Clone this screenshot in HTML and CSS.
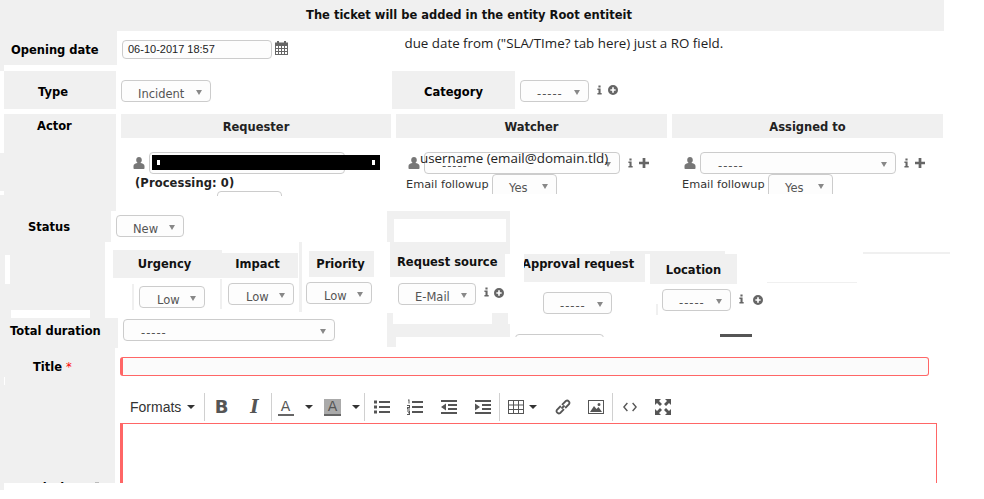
FILE: index.html
```html
<!DOCTYPE html>
<html lang="en">
<head>
<meta charset="utf-8">
<title>New ticket</title>
<link rel="stylesheet" href="styles.css">
</head>
<body>
<svg class="sprites" aria-hidden="true">
  <symbol id="i-user" viewBox="0 0 12 12"><path d="M6 0C4.3 0 3.2 1.3 3.2 3c0 1.3.6 2.400 1.500 2.900C2.400 6.200.5 7 .5 9v2.200c0 .4.300.8.800.8h9.400c.5 0 .8-.4.800-.8V9c0-2-1.900-2.800-4.200-3.100.9-.5 1.500-1.600 1.500-2.900C8.800 1.300 7.700 0 6 0z"/></symbol>
  <symbol id="i-info" viewBox="0 0 6 11"><path d="M1.700 0h2.600v2.400H1.700zM.5 3.700h3.800v5.500H5.600V11H.5V9.200h1.300V5.500H.5z"/></symbol>
  <symbol id="i-plus" viewBox="0 0 11 11"><path d="M4 0h3v4h4v3H7v4H4V7H0V4h4z"/></symbol>
  <symbol id="i-plusc" viewBox="0 0 11 11"><path fill-rule="evenodd" d="M5.500 0a5.500 5.500 0 1 0 0 11 5.500 5.500 0 0 0 0-11zM4.600 2.600h1.800v2h2v1.800h-2v2H4.600v-2h-2V4.600h2z"/></symbol>
  <symbol id="i-cal" viewBox="0 0 13 14"><path fill-rule="evenodd" d="M2 0h2v1.500h5V0h2v1.500h2V14H0V1.500h2zM1 5v2h2V5zm3 0v2h2V5zm3 0v2h2V5zm3 0v2h2V5zM1 8v2h2V8zm3 0v2h2V8zm3 0v2h2V8zm3 0v2h2V8zM1 11v2h2v-2zm3 0v2h2v-2zm3 0v2h2v-2zm3 0v2h2v-2z"/></symbol>
</svg>

<main class="page">
  <header class="banner">The ticket will be added in the entity Root entiteit</header>

  <section class="row row-open">
    <div class="lab lab-open">Opening date</div>
    <div class="date">06-10-2017 18:57</div>
    <svg class="ico ico-cal"><use href="#i-cal"/></svg>
    <p class="note">due date from ("SLA/TIme? tab here) just a RO field.</p>
    <i class="scrap sc-i"></i>
  </section>

  <section class="row row-type">
    <div class="lab lab-type">Type</div>
    <div class="sel sel-type">Incident</div>
    <div class="lab lab-cat">Category</div>
    <div class="sel sel-cat dash">-----</div>
    <svg class="ico ico-i i-cat"><use href="#i-info"/></svg>
    <svg class="ico ico-pc"><use href="#i-plusc"/></svg>
  </section>

  <section class="row row-actor">
    <div class="lab lab-actor">Actor</div>
    <div class="actor a-req">
      <h3 class="bar">Requester</h3>
      <div class="actor-line">
        <svg class="ico ico-user"><use href="#i-user"/></svg>
        <div class="sel sel-actor sel-req"></div>
      </div>
      <div class="processing">(Processing: 0)</div>
      <div class="clip clip-req"><div class="sel sel-cut"></div></div>
      <div class="redact"><i class="tick"></i><i class="tick"></i></div>
    </div>
    <div class="actor a-wat">
      <h3 class="bar">Watcher</h3>
      <div class="actor-line">
        <svg class="ico ico-user"><use href="#i-user"/></svg>
        <div class="sel sel-actor dash">-----</div>
        <svg class="ico ico-i"><use href="#i-info"/></svg>
        <svg class="ico ico-p"><use href="#i-plus"/></svg>
      </div>
      <div class="follow"><span class="follow-t">Email followup</span><div class="clip"><div class="sel sel-yes">Yes</div></div></div>
      <div class="typed">username (email@domain.tld)</div>
    </div>
    <div class="actor a-ass">
      <h3 class="bar">Assigned to</h3>
      <div class="actor-line">
        <svg class="ico ico-user"><use href="#i-user"/></svg>
        <div class="sel sel-actor dash">-----</div>
        <svg class="ico ico-i"><use href="#i-info"/></svg>
        <svg class="ico ico-p"><use href="#i-plus"/></svg>
      </div>
      <div class="follow"><span class="follow-t">Email followup</span><div class="clip"><div class="sel sel-yes">Yes</div></div></div>
    </div>
    <i class="scrap sc-j"></i>
  </section>

  <section class="row row-block">
    <div class="block-left">
      <div class="row sub-status">
        <div class="lab lab-status">Status</div>
        <div class="sel sel-status">New</div>
      </div>
      <div class="row sub-prio">
        <div class="lab lab-blank"></div>
        <div class="cell c-urg"><div class="bar2">Urgency</div><div class="sel sel-low">Low</div></div>
        <div class="cell c-imp"><div class="bar2">Impact</div><div class="sel sel-low">Low</div></div>
        <div class="cell c-pri"><div class="bar2">Priority</div><div class="sel sel-low">Low</div></div>
      </div>
      <div class="row sub-dur">
        <div class="lab lab-dur">Total duration</div>
        <div class="sel sel-dur dash">-----</div>
      </div>
    </div>
    <div class="req">
      <div class="req-top"><div class="req-inset"></div></div>
      <div class="req-bar">Request source</div>
      <div class="req-line">
        <div class="sel sel-mail">E-Mail</div>
        <svg class="ico ico-i"><use href="#i-info"/></svg>
        <svg class="ico ico-pc"><use href="#i-plusc"/></svg>
      </div>
      <div class="req-foot"></div>
    </div>
    <div class="appr">
      <div class="appr-bar">Approval request</div>
      <div class="sel sel-appr dash">-----</div>
      <div class="clip clip-appr"><div class="sel sel-cut2"></div></div>
    </div>
    <div class="loc">
      <div class="loc-bar">Location</div>
      <div class="loc-line">
        <div class="sel sel-loc dash">-----</div>
        <svg class="ico ico-i"><use href="#i-info"/></svg>
        <svg class="ico ico-pc"><use href="#i-plusc"/></svg>
      </div>
      <div class="dark"></div>
    </div>
    <i class="scrap sc-a"></i><i class="scrap sc-b"></i><i class="scrap sc-c"></i><i class="scrap sc-d"></i>
    <i class="scrap sc-e"></i><i class="scrap sc-f"></i><i class="scrap sc-g"></i><i class="scrap sc-h"></i>
    <i class="scrap sc-k"></i><i class="scrap sc-l"></i><i class="scrap sc-m"></i><i class="scrap sc-n"></i>
    <i class="wipe w-a"></i><i class="wipe w-b"></i>
  </section>

  <section class="row row-title">
    <div class="lab lab-title">Title <span class="req-star">*</span></div>
    <div class="title-input"></div>
    <i class="wipe w-c"></i><i class="wipe w-d"></i>
  </section>

  <section class="row row-desc">
    <div class="lab lab-desc"><span class="desc-t">Description <span class="req-star">*</span></span><i class="help-mark"></i></div>
    <div class="editor">
      <div class="toolbar">
        <div class="fmt">Formats<i class="caret caret-fmt"></i></div>
        <i class="sep"></i>
        <span class="t-b">B</span>
        <span class="t-i">I</span>
        <i class="sep"></i>
        <span class="t-a">A</span>
        <i class="caret caret-1"></i>
        <span class="t-a t-hi">A</span>
        <i class="caret caret-2"></i>
        <i class="sep"></i>
        <svg class="tb" viewBox="0 0 16 16"><path d="M0 1.500h3v3H0zM0 6.500h3v3H0zM0 11.500h3v3H0zM5 2h11v2H5zM5 7h11v2H5zM5 12h11v2H5z"/></svg>
        <svg class="tb" viewBox="0 0 16 16"><path d="M5 2h11v2H5zM5 7h11v2H5zM5 12h11v2H5zM1 .5h1.500v4H1.500V1.500H1zM0 6h3v3H1v.6h2v1H0V8h2v-1H0zM0 11.500h3v4.500H0v-1h2v-.7H1v-1h1v-.8H0z"/></svg>
        <svg class="tb" viewBox="0 0 16 16"><path d="M0 1h16v2H0zM7 5h9v2H7zM7 9h9v2H7zM0 13h16v2H0zM5 4.500v7L0 8z"/></svg>
        <svg class="tb" viewBox="0 0 16 16"><path d="M0 1h16v2H0zM7 5h9v2H7zM7 9h9v2H7zM0 13h16v2H0zM0 4.500v7L5 8z"/></svg>
        <i class="sep"></i>
        <svg class="tb tb-table" viewBox="0 0 16 14"><path fill-rule="evenodd" d="M0 0h16v14H0zM1 1v3.500h4V1zm5 0v3.500h4V1zm5 0v3.500h4V1zM1 5.500V9h4V5.500zm5 0V9h4V5.500zm5 0V9h4V5.500zM1 10v3h4v-3zm5 0v3h4v-3zm5 0v3h4v-3z"/></svg>
        <i class="caret caret-3"></i>
        <svg class="tb tb-link" viewBox="0 0 16 16"><path d="M6.500 9.500l3-3M5.800 7 2 10.800a2.300 2.300 0 0 0 3.200 3.200L9 10.200M7 5.800 10.800 2A2.300 2.300 0 0 1 14 5.200L10.200 9" /></svg>
        <svg class="tb" viewBox="0 0 16 14"><path fill-rule="evenodd" d="M0 0h16v14H0zM1 1v12h14V1zM2 12l4-6 2.500 3 2-2L14 12zM11 3a1.500 1.500 0 1 1 0 3 1.500 1.500 0 0 1 0-3z"/></svg>
        <i class="sep"></i>
        <svg class="tb tb-code" viewBox="0 0 16 10"><path d="M5 .5 1 5l4 4.500M11 .5 15 5l-4 4.500"/></svg>
        <svg class="tb" viewBox="0 0 16 16"><path d="M0 0h6L4 2l3 3-2 2-3-3-2 2zM16 0v6l-2-2-3 3-2-2 3-3-2-2zM0 16v-6l2 2 3-3 2 2-3 3 2 2zM16 16h-6l2-2-3-3 2-2 3 3 2-2z"/></svg>
      </div>
      <div class="area"></div>
    </div>
  </section>
  <i class="scrap sc-o"></i>
</main>
</body>
</html>
```

FILE: styles.css
```css
* { box-sizing: border-box; }
html, body { margin: 0; padding: 0; background: #fff; }
body { font-family: "DejaVu Sans", sans-serif; font-size: 11.500px; color: #000; }
.sprites { display: none; }

.page { position: relative; width: 984px; height: 499px; overflow: hidden; }
.banner { width: 944px; height: 31px; padding: 8px 6px 0 0; background: #f0f0f0; text-align: center; font-weight: bold; color: #111; }

.row { display: flex; align-items: flex-start; }
.row-open { height: 40px; position: relative; }
.row-type { height: 43px; }
.row-actor { height: 81px; position: relative; }
.row-block { height: 153px; position: relative; }
.row-title { height: 37px; position: relative; }
.row-desc { height: 98px; overflow: hidden; position: relative; }

.lab { flex: none; background: #f0f0f0; font-weight: bold; }
.lab-open { width: 117px; height: 34px; padding: 12px 0 0 11px; }
.lab-type { width: 112px; height: 38px; margin-left: 4px; padding: 14px 0 0 34px; }
.lab-cat { width: 123px; height: 38px; margin-left: 181px; padding: 14px 0 0; text-align: center; }
.lab-actor { width: 112px; height: 81px; margin-left: 4px; padding: 5px 0 0 33px; }
.lab-status { width: 111px; height: 47px; padding: 25px 0 0 28px; }
.lab-blank { width: 105px; height: 76px; }
.lab-dur { width: 118px; height: 30px; padding: 6px 0 0 10px; }
.lab-title { width: 115px; height: 37px; padding: 12px 0 0 33px; }
.lab-desc { width: 115px; height: 98px; padding: 96px 0 0 6px; overflow: hidden; white-space: nowrap; }
.req-star { color: #f00; font-weight: normal; }
.help-mark { position: absolute; left: 95px; top: 97px; width: 4px; height: 1px; background: #bbb; }

/* dropdowns */
.sel { position: relative; flex: none; height: 22px; padding: 5px 0 0 16px; border: 1px solid #ccc; border-radius: 4px; background: #fdfdfd; font-size: 11.500px; line-height: 16px; color: #555; }
.sel::after { content: ""; position: absolute; right: 8px; top: 9px; border: 3px solid transparent; border-top: 5px solid #888; border-bottom: 0; }
.dash { letter-spacing: 1px; }
.sel-type { width: 90px; margin: 9px 0 0 5px; }
.sel-cat { width: 69px; margin: 9px 0 0 5px; }
.sel-status { width: 68px; margin: 20px 0 0 5px; }
.sel-low { width: 66px; }
.sel-dur { width: 212px; margin: 1px 0 0 5px; padding-left: 17px; }
.sel-mail { width: 78px; }
.sel-appr { width: 69px; margin: 10px 0 0 19px; }
.sel-loc { width: 69px; }
.sel-actor { width: 196px; margin-left: 4px; padding-left: 17px; }
.sel-req::after { display: none; }
.sel-yes { width: 65px; height: 26px; }
.sel-cut, .sel-cut2 { height: 26px; background: #fff; }
.sel-cut::after, .sel-cut2::after { display: none; }
.sel-cut { width: 65px; }
.sel-cut2 { width: 89px; }
.clip { flex: none; height: 20px; overflow: hidden; }

/* small icons */
.ico { display: block; flex: none; fill: #666; }
.ico-cal { width: 13px; height: 14px; margin: 10px 0 0 3px; position: absolute; left: 272px; top: 0; fill: #666; }
.ico-i { width: 5px; height: 10px; margin: 0 0 0 8px; }
.ico-pc { width: 10px; height: 10px; margin: 0 0 0 6px; }
.ico-p { width: 10px; height: 10px; margin: 0 0 0 6px; }
.ico-user { width: 12px; height: 12px; fill: #777; }
.i-cat { margin-left: 8px; }
.row-type .ico { margin-top: 14px; }

/* top row */
.date { width: 150px; height: 19px; margin: 9px 0 0 5px; padding: 0 0 0 5px; border: 1px solid #ccc; border-radius: 4px; background: #fdfdfd; font-family: "Liberation Sans", sans-serif; font-size: 11px; line-height: 17px; color: #222; }
.note { margin: 4px 0 0 0; position: absolute; left: 404.500px; top: 0; font-family: "Open Sans", sans-serif; font-size: 13.350px; line-height: 16px; color: #222; white-space: nowrap; }

/* actors */
.actor { position: relative; flex: none; margin-left: 5px; }
.a-req { width: 270px; }
.a-wat, .a-ass { width: 271px; }
.bar { margin: 0; height: 24px; background: #f0f0f0; text-align: center; font-size: 11.500px; line-height: 26px; font-weight: bold; color: #222; }
.actor-line { display: flex; align-items: center; height: 22px; margin: 14px 0 0 12px; }
.processing { margin: 1px 0 0 14px; height: 16px; font-weight: bold; font-size: 11.500px; line-height: 16px; letter-spacing: .1px; color: #222; }
.clip-req { height: 5px; margin-left: 96px; width: 65px; }
.follow { display: flex; margin: 0 0 0 10px; height: 20px; }
.follow-t { width: 86px; padding-top: 3px; font-size: 11.300px; line-height: 16px; color: #333; white-space: nowrap; }
.redact { position: absolute; left: 31px; top: 41px; display: flex; justify-content: space-between; align-items: center; width: 228px; height: 15px; padding: 0 5px; background: #000; }
.tick { width: 3px; height: 5px; background: #fff; }
.typed { position: absolute; left: 24px; top: 35px; font-family: "Open Sans", sans-serif; font-size: 13.400px; line-height: 18px; color: #222; white-space: nowrap; }

/* block */
.block-left { flex: none; width: 387px; }
.sub-status { height: 47px; }
.sub-prio { height: 76px; }
.sub-dur { height: 30px; }
.cell { flex: none; font-weight: bold; }
.bar2 { background: #f0f0f0; text-align: center; color: #111; }
.c-urg { width: 109px; margin: 8px 0 0 8px; }
.c-urg .bar2 { height: 28px; padding-top: 7px; padding-right: 6px; }
.c-urg .sel { margin: 8px 0 0 26px; padding-left: 17px; font-weight: normal; }
.c-imp { width: 76px; margin-top: 11px; }
.c-imp .bar2 { height: 25px; padding-top: 4px; padding-right: 5px; }
.c-imp .sel { margin: 5px 0 0 6px; padding-left: 17px; font-weight: normal; }
.c-pri { width: 65px; margin: 9px 0 0 11px; }
.c-pri .bar2 { height: 26px; padding-top: 6px; padding-right: 2px; }
.c-pri .sel { margin: 5px 0 0 -3px; padding-left: 17px; font-weight: normal; }

.req { flex: none; width: 123px; margin-top: 16px; }
.req-top { height: 31px; padding: 8px 4px 0 7px; background: #f0f0f0; }
.req-inset { height: 23px; background: #fff; }
.req-bar { height: 35px; margin-left: 3px; width: 115px; padding: 13px 0 0 7px; background: #f0f0f0; font-weight: bold; color: #111; }
.req-line { display: flex; height: 47px; padding: 6px 0 0 11px; }
.req-line .ico-i { margin-top: 4px; }
.req-line .ico-pc { margin-top: 5px; margin-left: 5px; }
.req-foot { height: 13px; background: #f0f0f0; }

.appr { flex: none; width: 140px; margin-top: 59px; }
.appr-bar { width: 121px; height: 28px; margin-left: 14px; padding-top: 3px; text-indent: -2px; overflow: hidden; white-space: nowrap; background: #f0f0f0; font-weight: bold; color: #111; }
.sel-appr { margin-left: 33px; }
.clip-appr { height: 3px; margin: 20px 0 0 5px; width: 89px; }

.loc { flex: none; width: 120px; margin-top: 59px; }
.loc-bar { width: 87px; height: 30px; padding: 9px 0 0; text-align: center; background: #f0f0f0; font-weight: bold; color: #111; }
.loc-line { display: flex; margin: 5px 0 0 12px; }
.loc-line .ico-i { margin-top: 5px; }
.loc-line .ico-pc { margin-top: 6px; margin-left: 9px; }
.dark { width: 32px; height: 3px; margin: 23px 0 0 70px; background: #555; }

/* loose fragments left by the paste-up */
.scrap { position: absolute; background: #f0f0f0; }
.wipe { position: absolute; background: #fff; }
.sc-a { left: 387px; top: 118px; width: 6px; height: 11px; }
.sc-b { left: 492px; top: 118px; width: 16px; height: 11px; }
.sc-c { left: 387px; top: 142px; width: 9px; height: 10px; }
.sc-d { left: 610px; top: 56px; width: 115px; height: 3px; }
.sc-e { left: 863px; top: 57px; width: 87px; height: 2px; }
.sc-f { left: 767px; top: 87px; width: 90px; height: 1px; }
.sc-g { left: 132px; top: 89px; width: 2px; height: 26px; }
.sc-h { left: 656px; top: 109px; width: 2px; height: 11px; }
.sc-i { left: 0; top: 34px; width: 4px; height: 6px; }
.sc-j { left: 0; top: 39px; width: 4px; height: 38px; }
.sc-k { left: 111px; top: 0; width: 5px; height: 16px; }
.sc-l { left: 505px; top: 47px; width: 5px; height: 12px; }
.sc-m { left: 220px; top: 84px; width: 2px; height: 30px; }
.sc-n { left: 299px; top: 47px; width: 3px; height: 70px; }
.sc-o { left: 0; top: 483px; width: 4px; height: 7px; }
.w-a { left: 5px; top: 60px; width: 5px; height: 29px; }
.w-b { left: 11px; top: 115px; width: 79px; height: 8px; }
.w-c { left: 4px; top: 29px; width: 1px; height: 29px; }
.w-d { left: 0; top: 59px; width: 4px; height: 4px; }

/* title + editor */
.title-input { width: 809px; height: 19px; margin: 9px 0 0 5px; border: 1px solid #f66; border-left-width: 3px; border-radius: 3px; background: #fbfbfb; }
.editor { flex: none; width: 817px; margin-left: 5px; }
.toolbar { display: grid; grid-template-columns: 84px 1px 33px 33px 1px 27px 23px 21px 21px 1px 33px 34px 34px 33px 1px 27px 19px 33px 33px 1px 33px 34px; align-items: center; justify-items: center; height: 38px; padding-top: 8px; grid-template-rows: 28px; }
.fmt { justify-self: start; display: flex; align-items: center; padding-left: 10px; font-family: "Liberation Sans", sans-serif; font-size: 14px; color: #333; }
.sep { width: 1px; height: 28px; background: #d0d0d0; }
.caret { display: block; border: 4px solid transparent; border-top: 4px solid #333; border-bottom: 0; justify-self: start; }
.caret-fmt { margin-left: 6px; }
.caret-1 { margin-left: 6px; }
.caret-2 { margin-left: 9px; }
.caret-3 { margin-left: 2px; }
.t-b, .t-i, .t-a { font-family: "DejaVu Sans", sans-serif; color: #555; }
.t-b { font-size: 18px; line-height: 20px; font-weight: bold; }
.t-i { font-family: "DejaVu Serif", serif; font-size: 18px; line-height: 20px; font-style: italic; font-weight: bold; }
.t-a { width: 16px; height: 17px; font-size: 14px; line-height: 15px; text-align: center; border-bottom: 2px solid #666; }
.t-hi { width: 17px; background: #aaa; }
.tb { display: block; width: 16px; height: 16px; fill: #555; }
.tb-table { justify-self: start; margin-left: 8px; }
.tb-link { fill: none; stroke: #555; stroke-width: 1.800; }
.tb-code { width: 14px; height: 10px; fill: none; stroke: #555; stroke-width: 1.600; }
.area { height: 60px; border: 1px solid #f66; border-left-width: 3px; border-bottom: 0; }
```
